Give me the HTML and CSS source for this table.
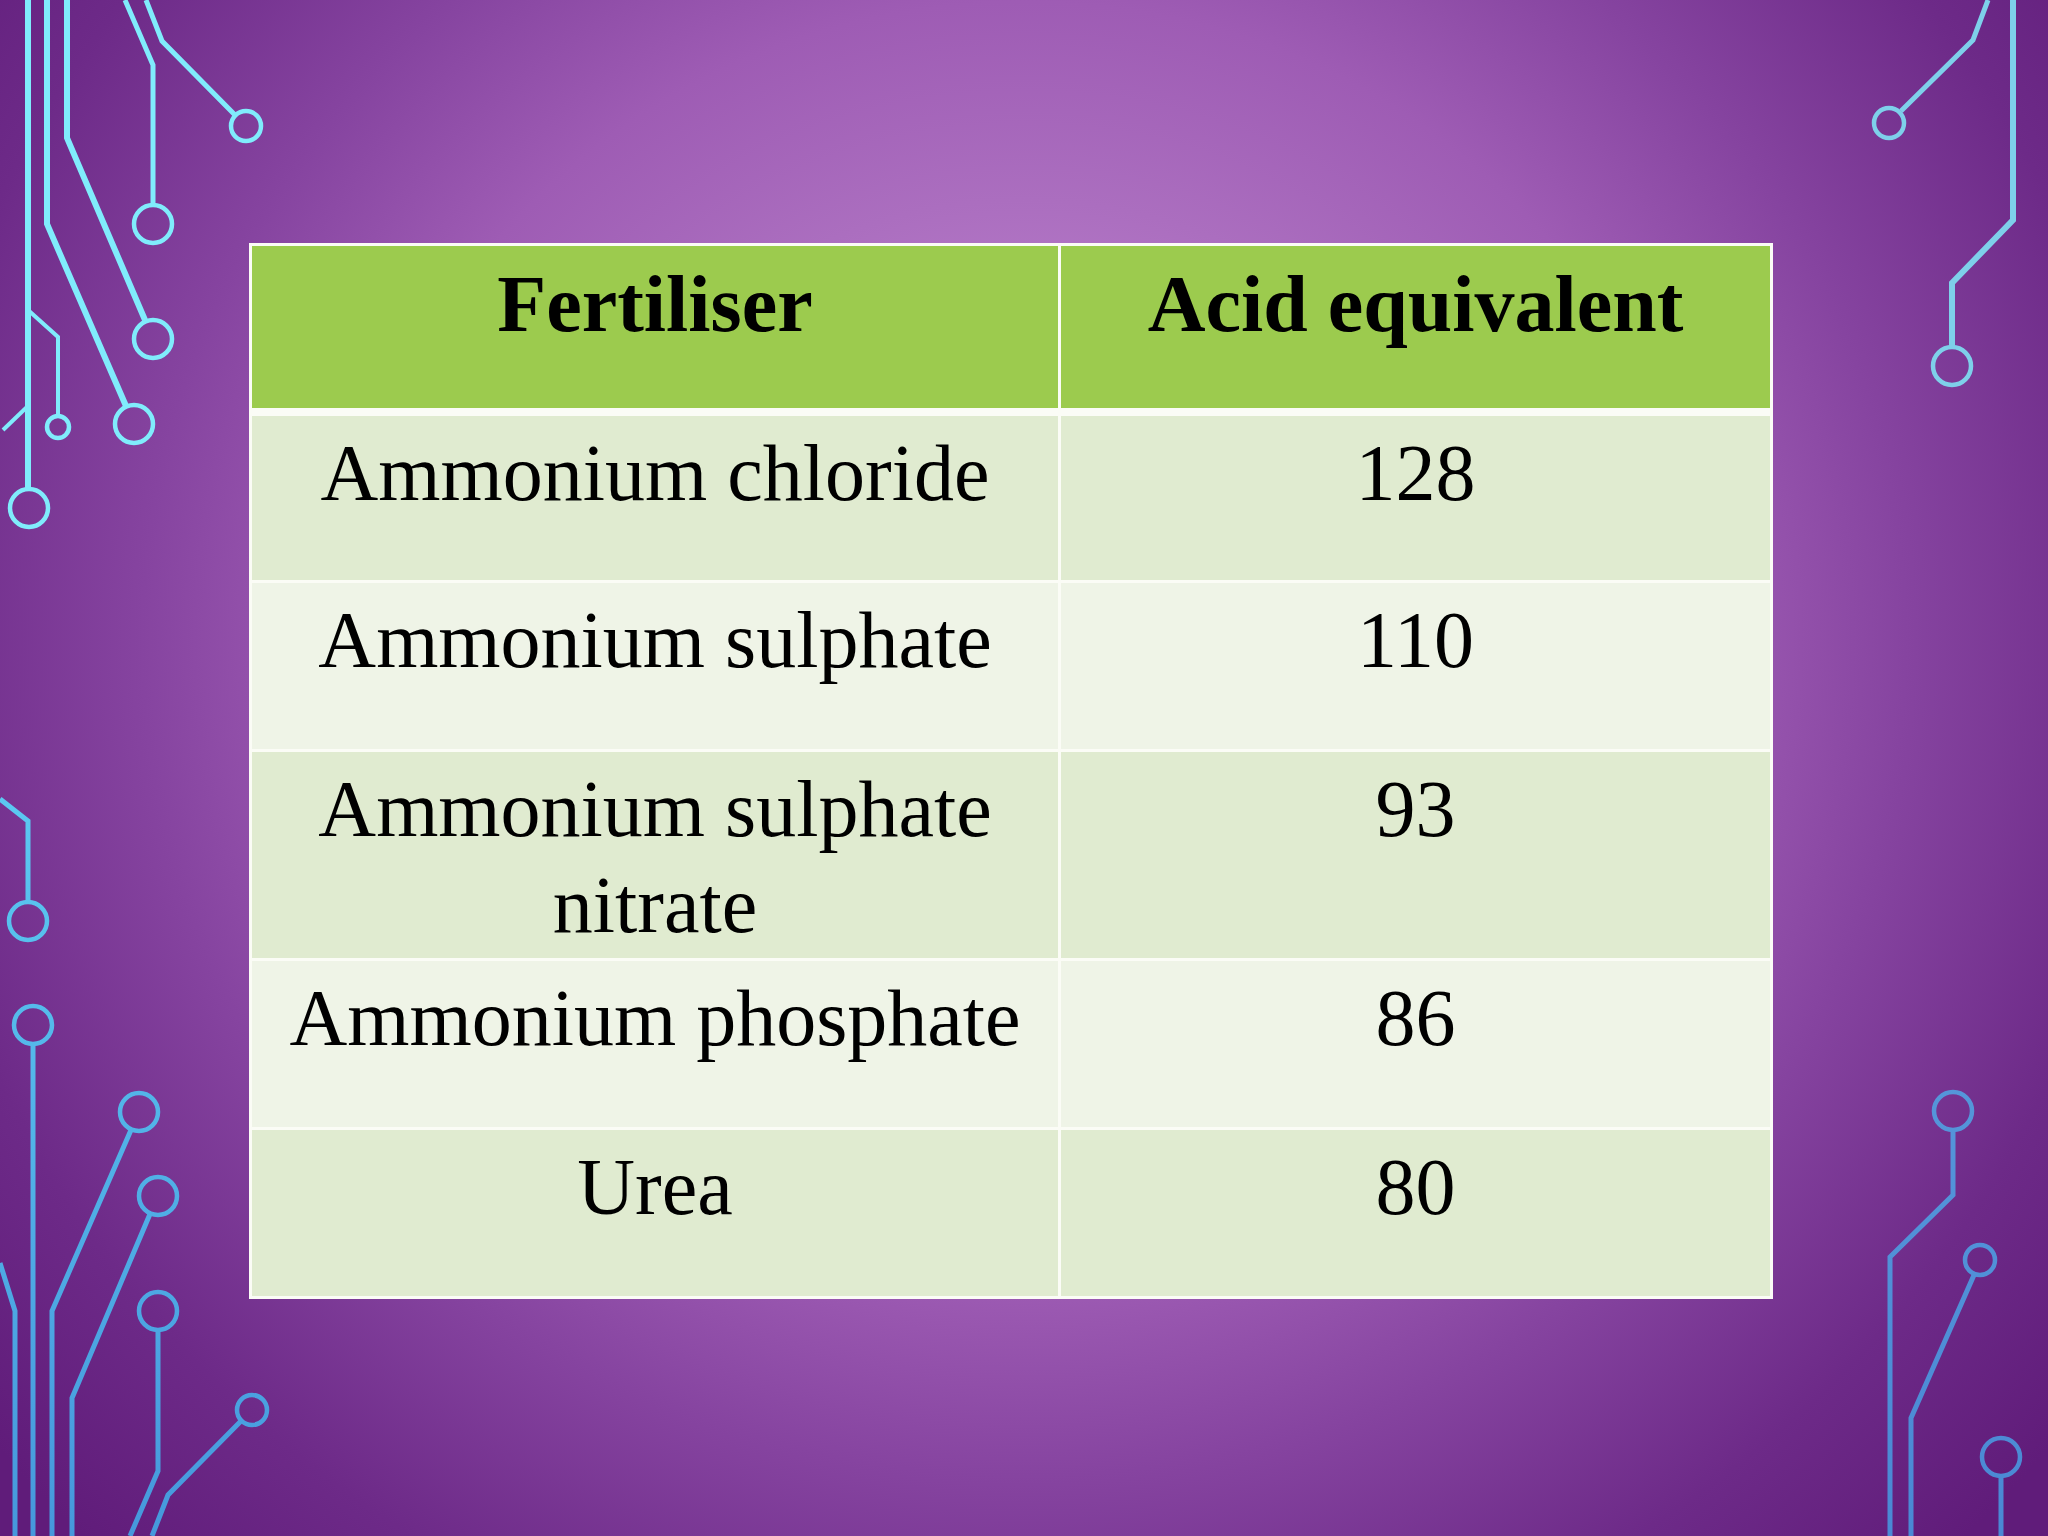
FILE: index.html
```html
<!DOCTYPE html>
<html lang="en">
<head>
<meta charset="utf-8">
<title>Acid equivalent of fertilisers</title>
<link rel="stylesheet" href="styles.css">
</head>
<body>
<div class="slide">
  <svg class="circuits" viewBox="0 0 2048 1536" xmlns="http://www.w3.org/2000/svg" aria-hidden="true">
    <defs>
      <linearGradient id="gbl" gradientUnits="userSpaceOnUse" x1="0" y1="780" x2="0" y2="1536">
        <stop offset="0" stop-color="#5ccaf2"/>
        <stop offset="1" stop-color="#4698dc"/>
      </linearGradient>
      <linearGradient id="gbr" gradientUnits="userSpaceOnUse" x1="0" y1="1080" x2="0" y2="1536">
        <stop offset="0" stop-color="#5596da"/>
        <stop offset="1" stop-color="#4a88d4"/>
      </linearGradient>
    </defs>
    <g class="tl">
      <path class="thick" d="M28,0 V489"/>
      <path class="thin" d="M28,310 L58,337 V416"/>
      <path class="thin" d="M28,406 L3,430"/>
      <circle class="ring" cx="29" cy="508" r="19"/>
      <circle class="ring" cx="58" cy="427" r="11"/>
      <path class="thick" d="M47,0 V224 L126,406"/>
      <circle class="ring" cx="134" cy="424" r="19"/>
      <path class="thick" d="M67,0 V138 L145,320"/>
      <circle class="ring" cx="153" cy="339" r="19"/>
      <path class="mid" d="M125,0 L153,65 V204"/>
      <circle class="ring" cx="153" cy="224" r="19"/>
      <path class="mid" d="M146,0 L162,41 L235,115"/>
      <circle class="ring" cx="246" cy="126" r="15"/>
    </g>
    <g class="tr">
      <path class="mid" d="M1988,0 L1973,40 L1901,111"/>
      <circle class="ring" cx="1889" cy="123" r="15"/>
      <path class="thick" d="M2013,0 V220 L1952,283 V346"/>
      <circle class="ring" cx="1952" cy="366" r="19"/>
    </g>
    <g class="bl">
      <path class="mid" d="M0,799 L28,821 V901"/>
      <circle class="ring" cx="28" cy="921" r="19"/>
      <path class="mid" d="M33,1045 V1536"/>
      <circle class="ring" cx="33" cy="1025" r="19"/>
      <path class="mid" d="M131,1130 L52,1311 V1536"/>
      <circle class="ring" cx="139" cy="1112" r="19"/>
      <path class="mid" d="M150,1214 L72,1398 V1536"/>
      <circle class="ring" cx="158" cy="1196" r="19"/>
      <path class="mid" d="M158,1331 V1471 L130,1536"/>
      <circle class="ring" cx="158" cy="1311" r="19"/>
      <path class="mid" d="M241,1421 L168,1495 L152,1536"/>
      <circle class="ring" cx="252" cy="1410" r="15"/>
      <path class="mid" d="M0,1263 L15,1311 V1536"/>
    </g>
    <g class="br">
      <path class="mid" d="M1953,1131 V1195 L1890,1257 V1536"/>
      <circle class="ring" cx="1953" cy="1111" r="19"/>
      <path class="mid" d="M1974,1275 L1911,1418 V1536"/>
      <circle class="ring" cx="1980" cy="1260" r="15"/>
      <path class="mid" d="M2001,1477 V1536"/>
      <circle class="ring" cx="2001" cy="1457" r="19"/>
    </g>
  </svg>

  <div class="table">
    <div class="cell head">Fertiliser</div>
    <div class="cell head">Acid equivalent</div>

    <div class="cell odd first">Ammonium chloride</div>
    <div class="cell odd first">128</div>

    <div class="cell even">Ammonium sulphate</div>
    <div class="cell even">110</div>

    <div class="cell odd tall">Ammonium sulphate nitrate</div>
    <div class="cell odd tall">93</div>

    <div class="cell even">Ammonium phosphate</div>
    <div class="cell even">86</div>

    <div class="cell odd">Urea</div>
    <div class="cell odd">80</div>
  </div>
</div>
</body>
</html>
```
FILE: styles.css
```css
html, body {
  margin: 0;
  padding: 0;
}

body {
  width: 2048px;
  height: 1536px;
  overflow: hidden;
  font-family: "Liberation Serif", "Times New Roman", serif;
}

.slide {
  position: relative;
  width: 2048px;
  height: 1536px;
  box-sizing: border-box;
  padding: 243px 0 0 249px;
  background:
    radial-gradient(ellipse 1160px 1100px at 1024px 640px,
      #c88cd9 0%,
      #b478c7 30%,
      #ab6ebf 40%,
      #9e5cb4 58%,
      #8644a0 76%,
      #6d2a88 97%,
      #601c7a 115%);
}

.circuits {
  position: absolute;
  left: 0;
  top: 0;
  width: 2048px;
  height: 1536px;
  pointer-events: none;
}

.circuits path,
.circuits circle {
  fill: none;
  stroke-linejoin: miter;
  stroke-linecap: butt;
}

.circuits .thick { stroke-width: 6; }
.circuits .mid { stroke-width: 5; }
.circuits .thin { stroke-width: 4; }
.circuits .ring { stroke-width: 4.5; }

.tl path, .tl circle { stroke: #80ecfc; }
.tr path, .tr circle { stroke: #7ed0ea; }
.bl path, .bl circle { stroke: url(#gbl); }
.br path, .br circle { stroke: url(#gbr); }

.table {
  position: relative;
  display: grid;
  grid-template-columns: 806px 709px;
  gap: 3px;
  padding: 3px;
  width: max-content;
  background: #fbfcf6;
}

.cell {
  box-sizing: border-box;
  height: 166px;
  padding: 9px 10px 0;
  font-size: 80px;
  line-height: 96px;
  text-align: center;
  color: #000;
}

.head {
  height: 162px;
  margin-bottom: 5px;
  padding-top: 10px;
  background: #9ccb4e;
  font-weight: bold;
}

.first { height: 164px; }
.tall { height: 206px; }

.odd { background: #e0ebd0; }
.even { background: #eff4e7; }
```
